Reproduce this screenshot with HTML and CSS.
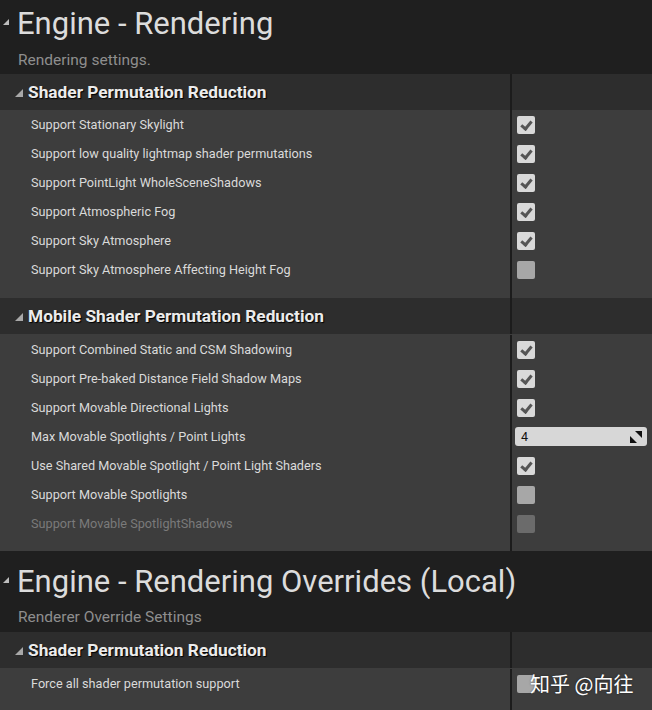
FILE: index.html
```html
<!DOCTYPE html>
<html>
<head>
<meta charset="utf-8">
<link rel="stylesheet" href="styles.css">
</head>
<body>
<div class="page">
  <div class="title-block">
    <div class="title-line">
      <svg class="tri tri-title" viewBox="0 0 7 7" width="6" height="6"><polygon points="7,0 7,7 0,7"/></svg>
      <h1 class="title">Engine - Rendering</h1>
    </div>
    <p class="subtitle">Rendering settings.</p>
  </div>

  <div class="category">
    <div class="cat-header">
      <div class="cat-name">
        <svg class="tri" viewBox="0 0 7 7" width="8" height="8"><polygon points="7,0 7,7 0,7"/></svg>
        <span>Shader Permutation Reduction</span>
      </div>
      <div class="cat-value"></div>
    </div>
    <div class="rows first">
      <div class="row"><div class="name">Support Stationary Skylight</div><div class="value"><span class="cb on"></span></div></div>
      <div class="row"><div class="name">Support low quality lightmap shader permutations</div><div class="value"><span class="cb on"></span></div></div>
      <div class="row"><div class="name">Support PointLight WholeSceneShadows</div><div class="value"><span class="cb on"></span></div></div>
      <div class="row"><div class="name">Support Atmospheric Fog</div><div class="value"><span class="cb on"></span></div></div>
      <div class="row"><div class="name">Support Sky Atmosphere</div><div class="value"><span class="cb on"></span></div></div>
      <div class="row"><div class="name">Support Sky Atmosphere Affecting Height Fog</div><div class="value"><span class="cb off"></span></div></div>
      <div class="row pad"><div class="name"></div><div class="value"></div></div>
    </div>
  </div>

  <div class="category">
    <div class="cat-header">
      <div class="cat-name">
        <svg class="tri" viewBox="0 0 7 7" width="8" height="8"><polygon points="7,0 7,7 0,7"/></svg>
        <span>Mobile Shader Permutation Reduction</span>
      </div>
      <div class="cat-value"></div>
    </div>
    <div class="rows">
      <div class="row"><div class="name">Support Combined Static and CSM Shadowing</div><div class="value"><span class="cb on"></span></div></div>
      <div class="row"><div class="name">Support Pre-baked Distance Field Shadow Maps</div><div class="value"><span class="cb on"></span></div></div>
      <div class="row"><div class="name">Support Movable Directional Lights</div><div class="value"><span class="cb on"></span></div></div>
      <div class="row"><div class="name">Max Movable Spotlights / Point Lights</div><div class="value"><div class="num"><span>4</span>
        <svg class="spin" viewBox="0 0 12 12" width="12" height="12"><polygon points="12,0 12,7 5,0"/><polygon points="0,12 0,5 7,12"/></svg></div></div></div>
      <div class="row"><div class="name">Use Shared Movable Spotlight / Point Light Shaders</div><div class="value"><span class="cb on"></span></div></div>
      <div class="row"><div class="name">Support Movable Spotlights</div><div class="value"><span class="cb off"></span></div></div>
      <div class="row"><div class="name disabled">Support Movable SpotlightShadows</div><div class="value"><span class="cb dis"></span></div></div>
      <div class="row pad"><div class="name"></div><div class="value"></div></div>
    </div>
  </div>

  <div class="title-block second">
    <div class="title-line">
      <svg class="tri tri-title" viewBox="0 0 7 7" width="6" height="6"><polygon points="7,0 7,7 0,7"/></svg>
      <h1 class="title">Engine - Rendering Overrides (Local)</h1>
    </div>
    <p class="subtitle">Renderer Override Settings</p>
  </div>

  <div class="category">
    <div class="cat-header">
      <div class="cat-name">
        <svg class="tri" viewBox="0 0 7 7" width="8" height="8"><polygon points="7,0 7,7 0,7"/></svg>
        <span>Shader Permutation Reduction</span>
      </div>
      <div class="cat-value"></div>
    </div>
    <div class="rows">
      <div class="row"><div class="name">Force all shader permutation support</div><div class="value"><span class="cb off"></span></div></div>
      <div class="row"><div class="name"></div><div class="value"></div></div>
    </div>
  </div>

  <div class="watermark">知乎 @向往</div>
</div>
</body>
</html>
```
FILE: styles.css
```css
html, body {
  margin: 0;
  padding: 0;
  background: #1f1f1f;
  overflow: hidden;
}
.page {
  position: relative;
  width: 652px;
  height: 710px;
  overflow: hidden;
  font-family: Roboto, "Liberation Sans", sans-serif;
}
.title-block {
  height: 74px;
  background: #1f1f1f;
  box-sizing: border-box;
  padding-top: 6px;
}
.title-block.second {
  height: 81px;
  padding-top: 13px;
}
.title-line {
  display: flex;
  align-items: center;
  height: 36px;
}
.tri {
  fill: #a8a8a8;
  flex: none;
}
.tri-title {
  fill: #bdbdbd;
  margin-left: 3px;
  margin-right: 8px;
  margin-top: -4px;
}
.title {
  margin: 0;
  font-weight: 400;
  font-size: 31px;
  color: #dcdcdc;
  line-height: 36px;
  white-space: nowrap;
}
.subtitle {
  margin: 8px 0 0 18px;
  font-size: 15.5px;
  color: #8e8e8e;
  line-height: 20px;
}
.second .subtitle {
  margin-top: 7px;
}
.category {
  background: #3d3d3d;
}
.cat-header {
  display: flex;
  height: 36px;
  background: #2d2d2d;
}
.cat-name {
  width: 510px;
  display: flex;
  align-items: center;
  box-sizing: border-box;
  padding-left: 15px;
  gap: 5px;
  font-weight: 700;
  font-size: 17.3px;
  color: #ececec;
  text-shadow: 1px 1px 1px #000;
}
.cat-name .tri {
  margin-top: 1px;
}
.cat-value, .value {
  flex: 1;
  border-left: 2px solid #1c1c1c;
}
.rows {
  padding-top: 1px;
}
.rows.first {
  padding-top: 0;
}
.rows.first .row.pad {
  height: 14px;
}
.row {
  display: flex;
  height: 29px;
}
.row.pad {
  height: 13px;
}
.name {
  width: 510px;
  box-sizing: border-box;
  padding-left: 31px;
  display: flex;
  align-items: center;
  font-size: 12.7px;
  color: #dadada;
  white-space: nowrap;
}
.name.disabled {
  color: #7a7a7a;
}
.value {
  display: flex;
  align-items: center;
  padding-left: 5px;
  padding-right: 5px;
}
.cb {
  width: 18px;
  height: 18px;
  border-radius: 2px;
  box-sizing: border-box;
  position: relative;
  display: block;
}
.cb.on {
  background: #d9d9d9;
}
.cb.on::after {
  content: "";
  position: absolute;
  left: 6px;
  top: 3px;
  width: 4px;
  height: 8px;
  border-right: 3px solid #555;
  border-bottom: 3px solid #555;
  transform: rotate(40deg);
}
.cb.off {
  background: #a7a7a7;
}
.cb.dis {
  background: #6b6b6b;
}
.num {
  width: 132px;
  height: 19px;
  margin-left: -2px;
  background: #d7d7d7;
  border-radius: 3px;
  display: flex;
  align-items: center;
  justify-content: space-between;
  box-sizing: border-box;
  padding: 0 5px 0 6px;
  font-size: 12.5px;
  color: #111;
}
.spin {
  fill: #111;
}
.watermark {
  position: absolute;
  left: 530px;
  top: 669px;
  font-family: "Noto Sans CJK SC", sans-serif;
  font-size: 20px;
  color: #ffffff;
  white-space: nowrap;
  text-shadow: 0 0 2px rgba(0,0,0,0.5);
}
```
